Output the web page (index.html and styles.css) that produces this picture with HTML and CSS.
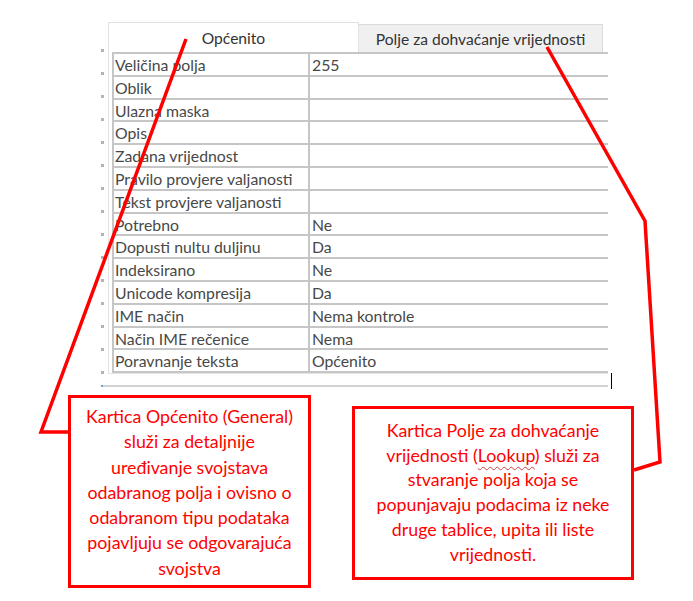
FILE: index.html
```html
<!DOCTYPE html>
<html lang="hr">
<head>
<meta charset="utf-8">
<title>Svojstva polja</title>
<link rel="stylesheet" href="styles.css">
</head>
<body>
<div class="page">
  <div class="editor">
    <div class="gutter">
      <span class="dot"></span><span class="dot"></span><span class="dot"></span><span class="dot"></span><span class="dot"></span>
      <span class="dot"></span><span class="dot"></span><span class="dot"></span><span class="dot"></span><span class="dot"></span>
      <span class="dot"></span><span class="dot"></span><span class="dot"></span><span class="dot"></span><span class="dot"></span>
    </div>
    <div class="designer">
      <div class="tabs">
        <div class="tab tab-active">Općenito</div>
        <div class="tab tab-inactive">Polje za dohvaćanje vrijednosti</div>
      </div>
      <div class="sheet">
        <div class="grid">
          <div class="lbl">Veličina polja</div><div class="val">255</div>
          <div class="lbl">Oblik</div><div class="val"></div>
          <div class="lbl">Ulazna maska</div><div class="val"></div>
          <div class="lbl">Opis</div><div class="val"></div>
          <div class="lbl">Zadana vrijednost</div><div class="val"></div>
          <div class="lbl">Pravilo provjere valjanosti</div><div class="val"></div>
          <div class="lbl">Tekst provjere valjanosti</div><div class="val"></div>
          <div class="lbl">Potrebno</div><div class="val">Ne</div>
          <div class="lbl">Dopusti nultu duljinu</div><div class="val">Da</div>
          <div class="lbl">Indeksirano</div><div class="val">Ne</div>
          <div class="lbl">Unicode kompresija</div><div class="val">Da</div>
          <div class="lbl">IME način</div><div class="val">Nema kontrole</div>
          <div class="lbl">Način IME rečenice</div><div class="val">Nema</div>
          <div class="lbl last">Poravnanje teksta</div><div class="val last">Općenito</div>
        </div>
      </div>
    </div>
    <div class="cursor"></div>
  </div>
  <div class="rule"><span class="rule-dot"></span></div>
  <div class="callouts">
    <div class="callout callout-left">Kartica Općenito (General)<br>služi za detaljnije<br>uređivanje svojstava<br>odabranog polja i ovisno o<br>odabranom tipu podataka<br>pojavljuju se odgovarajuća<br>svojstva</div>
    <div class="callout callout-right">Kartica Polje za dohvaćanje<br>vrijednosti (<span class="spell">Lookup</span>) služi za<br>stvaranje polja koja se<br>popunjavaju podacima iz neke<br>druge tablice, upita ili liste<br>vrijednosti.</div>
  </div>
  <svg class="arrows" width="693" height="601" viewBox="0 0 693 601" aria-hidden="true">
    <polyline points="186,39 41,432 70,432" fill="none" stroke="#ff0000" stroke-width="3.5" stroke-linejoin="miter"/>
    <polyline points="547,47 645,221 660,462 634,470" fill="none" stroke="#ff0000" stroke-width="3.5" stroke-linejoin="miter"/>
  </svg>
</div>
</body>
</html>
```

FILE: styles.css
```css
html, body {
  margin: 0;
  padding: 0;
  background: #ffffff;
}

.page {
  position: relative;
  width: 693px;
  height: 601px;
  overflow: hidden;
  padding-top: 22px;
  box-sizing: border-box;
  font-family: Lato, "Open Sans", sans-serif;
}

.editor {
  display: flex;
  align-items: flex-start;
  padding-left: 100px;
}

.gutter {
  width: 8px;
  display: flex;
  flex-direction: column;
  gap: 20px;
  padding-top: 27px;
}

.dot {
  display: block;
  width: 3px;
  height: 3px;
  margin-left: 1px;
  background: #b4b4b4;
}

.designer {
  width: 500px;
}

.tabs {
  display: flex;
  align-items: flex-end;
  height: 30px;
}

.tab {
  box-sizing: border-box;
  display: flex;
  align-items: center;
  justify-content: center;
  font-size: 15.6px;
  color: #333333;
}

.tab-active {
  width: 251px;
  height: 30px;
  background: #ffffff;
  border: 1px solid #e2e2e2;
  border-bottom: none;
}

.tab-inactive {
  width: 244px;
  height: 28px;
  background: #f0f0f0;
  border: 1px solid #dadada;
  border-bottom: none;
  border-left: none;
  padding-top: 1px;
}

.sheet {
  border-left: 1px solid #e2e2e2;
  border-bottom: 1px solid #e4e4e4;
  padding-left: 3px;
  padding-bottom: 2px;
}

.grid {
  display: grid;
  grid-template-columns: 198px 298px;
  grid-auto-rows: 22.8px;
}

.lbl, .val {
  box-sizing: border-box;
  border-top: 2px solid #c6c6c6;
  font-size: 15.8px;
  line-height: 21px;
  color: #484848;
  white-space: nowrap;
}

.lbl {
  border-left: 2px solid #c6c6c6;
  border-right: 2px solid #c6c6c6;
  padding-left: 1px;
}

.val {
  padding-left: 2px;
}

.lbl.last, .val.last {
  height: 24.8px;
  border-bottom: 2px solid #c6c6c6;
}

.cursor {
  width: 1px;
  height: 16px;
  margin-top: 351px;
  margin-left: 3px;
  background: #000000;
}

.rule {
  margin-left: 101px;
  width: 507px;
  height: 2px;
  margin-top: -4px;
  background: #d2d2d2;
}

.rule-dot {
  display: block;
  width: 2px;
  height: 2px;
  background: #7aa0c8;
}

.callouts {
  display: flex;
  align-items: flex-start;
  padding-left: 68px;
  margin-top: 8px;
}

.callout {
  box-sizing: border-box;
  border: 3.5px solid #ff0000;
  background: #ffffff;
  color: #ff0000;
  text-align: center;
  font-family: Lato, "Open Sans", sans-serif;
  font-size: 17.8px;
  white-space: nowrap;
}

.callout-left {
  width: 243px;
  height: 193px;
  line-height: 25.3px;
  padding: 6px 0 0;
}

.callout-right {
  width: 282px;
  height: 174px;
  margin-left: 41px;
  margin-top: 11px;
  line-height: 24.7px;
  padding: 9px 0 0;
}

.spell {
  text-decoration: underline wavy #d04040;
  text-decoration-thickness: 1px;
  text-underline-offset: 4px;
}

.arrows {
  position: absolute;
  left: 0;
  top: 0;
  pointer-events: none;
}
```
